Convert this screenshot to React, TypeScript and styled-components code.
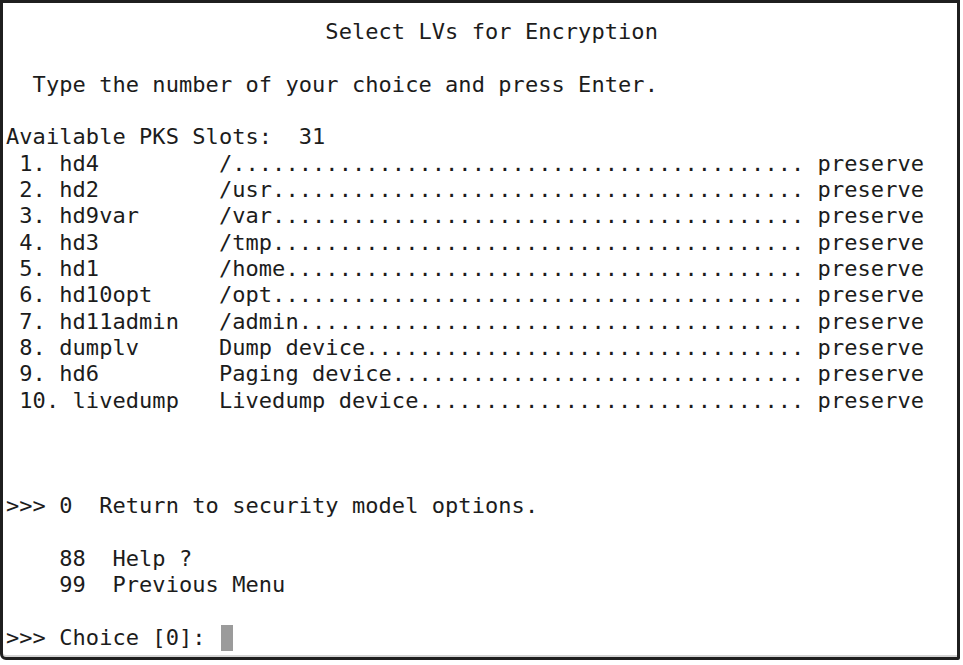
import React from "react";
import styled, { createGlobalStyle } from "styled-components";

const GlobalStyle = createGlobalStyle`
  html, body {
    margin: 0;
    padding: 0;
    background: #ffffff;
  }
`;

const Frame = styled.div`
  box-sizing: border-box;
  width: 960px;
  height: 660px;
  border: 3px solid #1f1f1f;
  border-radius: 0 0 2px 6px;
  background: #ffffff;
  box-shadow: inset 0 -2px 0 #d4d4d4;
  padding: 16px 0 0 3px;
  overflow: hidden;
`;

const Screen = styled.div`
  font-family: "DejaVu Sans Mono", "Liberation Mono", monospace;
  font-size: 22px;
  letter-spacing: 0.06px;
  line-height: 26.35px;
  color: #1c1c1c;
  display: flex;
  flex-direction: column;
`;

const Line = styled.div`
  white-space: pre;
  height: 26.35px;
  display: flex;
  align-items: stretch;
`;

const Blank = styled.div<{ $rows: number }>`
  height: ${(p) => p.$rows * 26.35}px;
`;

const Cursor = styled.span`
  display: inline-block;
  width: 12px;
  margin-left: 2px;
  background: #9b9b9b;
`;

type Lv = { name: string; desc: string };

const lvs: Lv[] = [
  { name: "hd4", desc: "/" },
  { name: "hd2", desc: "/usr" },
  { name: "hd9var", desc: "/var" },
  { name: "hd3", desc: "/tmp" },
  { name: "hd1", desc: "/home" },
  { name: "hd10opt", desc: "/opt" },
  { name: "hd11admin", desc: "/admin" },
  { name: "dumplv", desc: "Dump device" },
  { name: "hd6", desc: "Paging device" },
  { name: "livedump", desc: "Livedump device" },
];

const DESC_COL = 16;
const DOTS_END = 60;

function formatRow(i: number, lv: Lv): string {
  const head = ` ${i + 1}. ${lv.name}`.padEnd(DESC_COL, " ");
  const body = lv.desc.padEnd(DOTS_END - DESC_COL, ".");
  return `${head}${body} preserve`;
}

export default function App() {
  return (
    <>
      <GlobalStyle />
      <Frame>
        <Screen>
          <Line>{"                        Select LVs for Encryption"}</Line>
          <Blank $rows={1} />
          <Line>{"  Type the number of your choice and press Enter."}</Line>
          <Blank $rows={1} />
          <Line>{"Available PKS Slots:  31"}</Line>
          {lvs.map((lv, i) => (
            <Line key={lv.name}>{formatRow(i, lv)}</Line>
          ))}
          <Blank $rows={3} />
          <Line>{">>> 0  Return to security model options."}</Line>
          <Blank $rows={1} />
          <Line>{"    88  Help ?"}</Line>
          <Line>{"    99  Previous Menu"}</Line>
          <Blank $rows={1} />
          <Line>
            {">>> Choice [0]: "}
            <Cursor />
          </Line>
        </Screen>
      </Frame>
    </>
  );
}
